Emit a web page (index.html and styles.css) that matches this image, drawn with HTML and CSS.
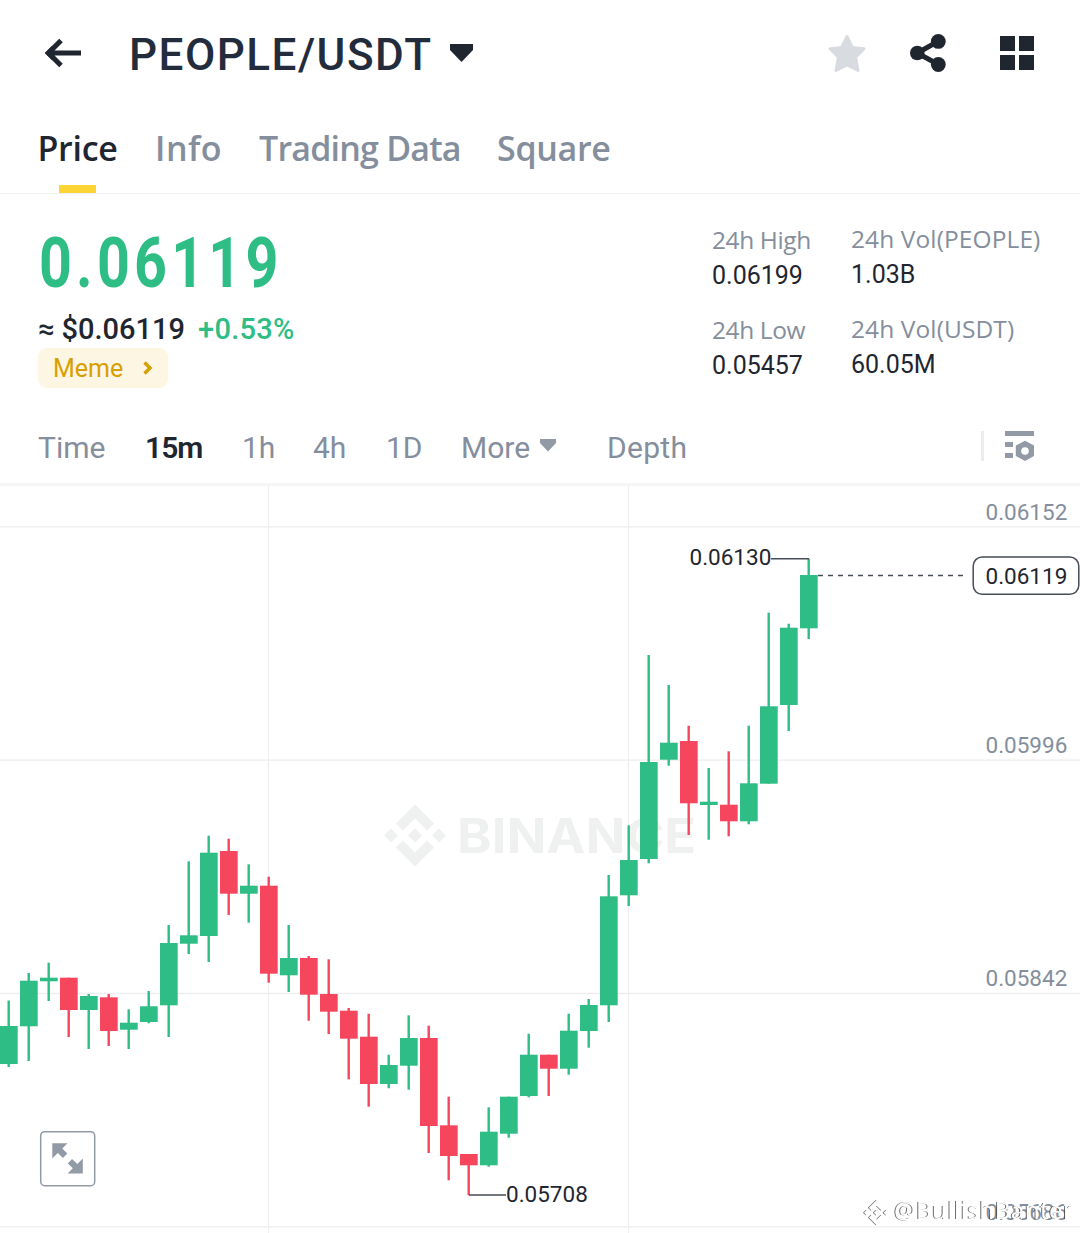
FILE: index.html
```
<!DOCTYPE html>
<html lang="en">

<head>
    <meta charset="UTF-8">
    <meta name="viewport" content="width=device-width, initial-scale=1.0">
    <title>PEOPLE/USDT</title>
    <link rel="stylesheet" href="styles.css">
</head>

<body>
    <div class="main">
        <header class="header">
            <svg class="back" viewBox="0 0 38 30" width="38" height="30">
                <path d="M37 15H5M17 2.5L4.5 15L17 27.5" fill="none" stroke="#1f2630" stroke-width="5" />
                <path d="M0.8 15L8 7.8V22.2Z" fill="#1f2630" />
            </svg>
            <h1 class="pair">PEOPLE/USDT</h1>
            <svg class="pair-caret" viewBox="0 0 23 18" width="23" height="18">
                <path d="M0 0H23V6L11.5 18L0 6Z" fill="#1f2630" />
            </svg>
            <div class="actions">
                <svg viewBox="0 0 38 38" width="38" height="38">
                    <path d="M19 2.5L24.3 13.5L36 14.8L27.6 23.3L30 36.5L19 30.8L8 36.5L10.4 23.3L2 14.8L13.7 13.5Z"
                        fill="#d8dce1" stroke="#d8dce1" stroke-width="3" stroke-linejoin="round" />
                </svg>
                <svg viewBox="0 0 36 38" width="36" height="38">
                    <path d="M28.3 7.3L7.3 19L28.3 30.5" fill="none" stroke="#1f2630" stroke-width="5" />
                    <circle cx="7.3" cy="19" r="7.3" fill="#1f2630" />
                    <circle cx="28.3" cy="7.4" r="7.4" fill="#1f2630" />
                    <circle cx="28.3" cy="30.5" r="7.4" fill="#1f2630" />
                </svg>
                <svg viewBox="0 0 34 34" width="34" height="34">
                    <path d="M0 0H15V15H0ZM19 0H34V15H19ZM0 19H15V34H0ZM19 19H34V34H19Z" fill="#1f2630" />
                </svg>
            </div>
        </header>

        <nav class="tabs">
            <a class="tab active">Price</a>
            <a class="tab info">Info</a>
            <a class="tab trading">Trading Data</a>
            <a class="tab">Square</a>
        </nav>

        <section class="summary">
            <div class="quote">
                <div class="price">0.06119</div>
                <div class="fiat"><span class="approx">≈</span> <span class="usd">$0.06119</span> <span class="change">+0.53%</span></div>
                <a class="tag">Meme
                    <svg viewBox="0 0 10 14" width="10" height="14">
                        <path d="M1.5 1.5L7 7L1.5 12.5" fill="none" stroke="#d89f00" stroke-width="3.4" />
                    </svg>
                </a>
            </div>
            <div class="stats">
                <div class="stat"><span class="label">24h High</span><span class="value">0.06199</span></div>
                <div class="stat"><span class="label">24h Low</span><span class="value">0.05457</span></div>
            </div>
            <div class="stats volume">
                <div class="stat"><span class="label">24h Vol(PEOPLE)</span><span class="value">1.03B</span></div>
                <div class="stat"><span class="label">24h Vol(USDT)</span><span class="value">60.05M</span></div>
            </div>
        </section>

        <div class="intervals">
            <span class="time">Time</span>
            <span class="selected">15m</span>
            <span class="h1">1h</span>
            <span class="h4">4h</span>
            <span class="d1">1D</span>
            <span class="more">More
                <svg viewBox="0 0 16 13" width="16" height="13">
                    <path d="M0 0H16V4L8 12.5L0 4Z" fill="#929aa5" />
                </svg>
            </span>
            <span class="depth">Depth</span>
            <svg class="settings" viewBox="0 0 54 32" width="54" height="32">
                <path d="M0 1H3V31H0Z" fill="#eaecef" />
                <path d="M24 1H53V6H24ZM24 12H32V17H24ZM24 23H32V28H24Z" fill="#929aa5" />
                <path d="M44 10.7L53 15.5V26L44 31L34.8 26V15.5Z" fill="#929aa5" />
                <circle cx="44" cy="21" r="3.8" fill="#fff" />
            </svg>
        </div>

        <svg class="chart" viewBox="0 486 1080 747" width="1080" height="747">
            <defs>
                <g id="logo">
                    <path d="M38.7 53.2L63.3 28.6L87.9 53.2L102.2 38.9L63.3 0L24.4 38.9Z" />
                    <path d="M0 63.3L14.3 49L28.6 63.3L14.3 77.6Z" />
                    <path d="M38.7 73.4L63.3 98L87.9 73.4L102.2 87.7L63.3 126.6L24.4 87.7Z" />
                    <path d="M98 63.3L112.3 49L126.6 63.3L112.3 77.6Z" />
                    <path d="M77.8 63.3L63.3 48.8L48.8 63.3L63.3 77.8Z" />
                </g>
            </defs>

            <g class="grid">
                <path d="M0 526.8H1080M0 760.2H1080M0 993.5H1080M0 1226.8H1080" />
                <path d="M268.5 486V1233M628.5 486V1233" />
            </g>

            <g class="brand">
                <use href="#logo" transform="translate(384 804.5) scale(0.49)" />
                <text x="457" y="853" textLength="239" lengthAdjust="spacingAndGlyphs">BINANCE</text>
            </g>

            <g id="candles"></g>

            <path class="marker" d="M771 558.7H809M469 1195H506" />
            <path class="current" d="M818 575.5H963" />
            <rect class="badge" x="973.2" y="557" width="105.6" height="37.3" rx="9" />

            <g class="axis">
                <text x="985.5" y="520">0.06152</text>
                <text x="985.5" y="753">0.05996</text>
                <text x="985.5" y="986">0.05842</text>
                <text x="985.5" y="1219.5">0.05686</text>
            </g>
            <g class="axis dark">
                <text x="985.5" y="583.8">0.06119</text>
                <text x="689.5" y="565">0.06130</text>
                <text x="506" y="1201.8">0.05708</text>
            </g>

            <g class="fullscreen">
                <rect x="40.7" y="1131.7" width="54" height="54" rx="4" />
                <path d="M52.3 1143.3H67.5L62.3 1148.5L67.3 1153.5L63 1158L57.8 1153L52.3 1158.5Z" />
                <path d="M82.8 1173.5H67.6L72.8 1168.3L67.8 1163.5L72 1159L77.3 1164L82.8 1158.5Z" />
            </g>

            <g class="author">
                <use href="#logo" transform="translate(864 1200) scale(0.2)" />
                <text x="894" y="1219" textLength="179">@BullishBanter</text>
            </g>
        </svg>
    </div>

    <script>
        // [high, open/close top, open/close bottom, low, up]
        const candles = [
            [1000.5, 1026, 1064, 1067, 1],
            [973, 980.7, 1026.3, 1061, 1],
            [962.7, 977.7, 981.3, 1001, 1],
            [977.7, 977.7, 1010, 1037, 0],
            [994, 996, 1010, 1049, 1],
            [994, 997.3, 1031, 1046, 0],
            [1009.3, 1022.7, 1029.7, 1049, 1],
            [991, 1006.3, 1022, 1023.3, 1],
            [925, 943, 1005.3, 1037, 1],
            [861.3, 935.3, 943.7, 954, 1],
            [835.7, 852.7, 936, 962, 1],
            [838.7, 851, 893.7, 915, 0],
            [864.3, 885.7, 893.7, 922.7, 1],
            [876.7, 885.7, 973.7, 982.7, 0],
            [925, 958, 975.3, 992, 1],
            [956, 958, 994.7, 1020.7, 0],
            [959.3, 994, 1011.7, 1034, 0],
            [1008, 1010.7, 1038.7, 1079.3, 0],
            [1013.7, 1036.7, 1084, 1106.7, 0],
            [1054.7, 1065, 1084, 1088.3, 1],
            [1015.3, 1038, 1065.7, 1089.7, 1],
            [1025.7, 1038, 1126, 1153, 0],
            [1096.7, 1125.3, 1156, 1180.3, 0],
            [1154, 1154, 1165.3, 1195.3, 0],
            [1107.3, 1131.7, 1165.3, 1166.7, 1],
            [1096.7, 1096.7, 1133.7, 1137.7, 1],
            [1033.7, 1054.7, 1096, 1097.3, 1],
            [1054.7, 1054.7, 1068.7, 1096, 0],
            [1013.7, 1030.7, 1068.7, 1074.7, 1],
            [999, 1005, 1031, 1047.7, 1],
            [875, 896.3, 1005.3, 1022, 1],
            [825.3, 860, 895.3, 906, 1],
            [655, 762, 859, 863.3, 1],
            [685, 742.7, 759.7, 765.7, 1],
            [725.7, 741, 803.3, 835, 0],
            [768, 801.7, 805, 839.7, 1],
            [751.3, 804.7, 821.3, 836.3, 0],
            [725.7, 783.3, 821.3, 824.3, 1],
            [612.7, 706.3, 783.7, 783.7, 1],
            [623.7, 627.7, 705, 731, 1],
            [558.7, 575, 628.3, 639, 1]
        ]

        function drawRect(x, y, width, height, color) {
            const rect = document.createElementNS("http://www.w3.org/2000/svg", "rect")
            rect.setAttribute("x", x)
            rect.setAttribute("y", y)
            rect.setAttribute("width", width)
            rect.setAttribute("height", height)
            rect.setAttribute("class", color)
            document.getElementById("candles").appendChild(rect)
        }

        candles.forEach(([high, top, bottom, low, up], i) => {
            const color = up ? "up" : "down"
            drawRect(i * 20 + 7.5, high, 2.4, low - high, color)
            drawRect(i * 20, top, 17.7, bottom - top, color)
        })
    </script>
</body>

</html>
```
FILE: styles.css
```
body {
    font-family: Roboto, "Liberation Sans", sans-serif;
    margin: 0;
    padding: 0;
    background: #fff;
    color: #1f2630;
}

.main {
    width: 1080px;
    height: 1233px;
    overflow: hidden;
}

svg {
    display: block;
    flex-shrink: 0;
}

.header {
    display: flex;
    align-items: center;
    box-sizing: border-box;
    height: 106px;
    padding: 0 46px 0 44px;
}

.pair {
    margin: 4px 0 0 47px;
    width: 321px;
    font-size: 44px;
    font-weight: 550;
    letter-spacing: 1.5px;
    white-space: nowrap;
    color: #232c3d;
}

.actions {
    display: flex;
    align-items: center;
    margin-left: auto;
}

.actions svg + svg {
    margin-left: 44px;
}

.actions svg + svg + svg {
    margin-left: 54px;
}

.tabs {
    display: flex;
    gap: 36px;
    box-sizing: border-box;
    height: 88px;
    padding-left: 38px;
    border-bottom: 1px solid #eef0f1;
    font-family: "Open Sans", sans-serif;
    font-size: 34px;
    font-weight: 550;
    line-height: 84px;
    letter-spacing: -0.3px;
    color: #848e9c;
}

.tab {
    white-space: nowrap;
}

.active {
    display: flex;
    flex-direction: column;
    align-items: center;
    width: 79px;
    color: #1f2630;
}

.active::after {
    content: "";
    width: 37px;
    height: 8px;
    margin-top: -5px;
    background: #fcd535;
}

.info {
    width: 68px;
    padding-left: 2px;
    letter-spacing: 0.5px;
}

.trading {
    width: 202px;
    letter-spacing: -0.8px;
}

.summary {
    display: flex;
    box-sizing: border-box;
    height: 216px;
    padding-left: 38px;
}

.quote {
    width: 674px;
    padding-top: 28px;
}

.price {
    font-size: 70px;
    font-weight: 700;
    line-height: 82px;
    letter-spacing: 5.1px;
    margin-left: 1px;
    transform: scaleX(0.82);
    transform-origin: left;
    color: #2ebd85;
}

.fiat {
    display: flex;
    align-items: center;
    box-sizing: border-box;
    height: 44px;
    padding-top: 5px;
    font-size: 29px;
    font-weight: 500;
}

.usd {
    margin-left: 7px;
}

.change {
    margin-left: 13px;
    letter-spacing: 0.3px;
    color: #2ebd85;
}

.tag {
    display: flex;
    align-items: center;
    justify-content: space-between;
    box-sizing: border-box;
    width: 130px;
    height: 40px;
    padding: 0 15px;
    border-radius: 9px;
    background: #fdf6e3;
    font-size: 25px;
    color: #d89f00;
}

.stats {
    width: 139px;
    padding-top: 29px;
}

.volume {
    width: 200px;
    padding-top: 28px;
}

.stat {
    display: flex;
    flex-direction: column;
    height: 90px;
    font-size: 25px;
    line-height: 38px;
    white-space: nowrap;
}

.label {
    font-family: "Open Sans", sans-serif;
    font-size: 24.5px;
    line-height: 34px;
    letter-spacing: 0.1px;
    color: #848e9c;
}

.stats:not(.volume) .label {
    letter-spacing: -0.4px;
}

.intervals {
    display: flex;
    align-items: center;
    box-sizing: border-box;
    height: 76px;
    padding: 1px 45px 0 38px;
    border-bottom: 3px solid #f4f5f6;
    font-size: 30px;
    color: #848e9c;
}

.time {
    width: 107px;
}

.selected {
    width: 97px;
    font-weight: 600;
    letter-spacing: -1px;
    color: #1f2630;
}

.h1 {
    width: 71px;
}

.h4 {
    width: 73px;
}

.d1 {
    width: 75px;
}

.more {
    display: flex;
    align-items: center;
    gap: 10px;
    width: 146px;
}

.more svg {
    margin-bottom: 3px;
}

.depth {
    letter-spacing: 0.3px;
}

.settings {
    margin: 0 0 3px auto;
}

.grid path {
    fill: none;
    stroke: #edeef0;
    stroke-width: 1.3;
}

.brand {
    fill: #eff1f1;
    font-family: Inter, sans-serif;
    font-size: 48px;
    font-weight: 700;
}

.up {
    fill: #2ebd85;
}

.down {
    fill: #f6465d;
}

.marker {
    fill: none;
    stroke: #474d57;
    stroke-width: 1.4;
}

.current {
    stroke: #474d57;
    stroke-width: 1.4;
    stroke-dasharray: 5 5;
}

.badge {
    fill: #fff;
    stroke: #474d57;
    stroke-width: 1.5;
}

.axis {
    font-size: 22.5px;
    fill: #848e9c;
}

.dark {
    fill: #1f2630;
}

.fullscreen rect {
    fill: #fff;
    stroke: #929aa5;
    stroke-width: 1.5;
}

.fullscreen path {
    fill: #929aa5;
}

.author {
    font-family: "Noto Sans", sans-serif;
    font-size: 24px;
    fill: #fff;
    filter: drop-shadow(-0.4px 0.4px 0.5px rgba(60, 60, 60, 0.75));
}
```
